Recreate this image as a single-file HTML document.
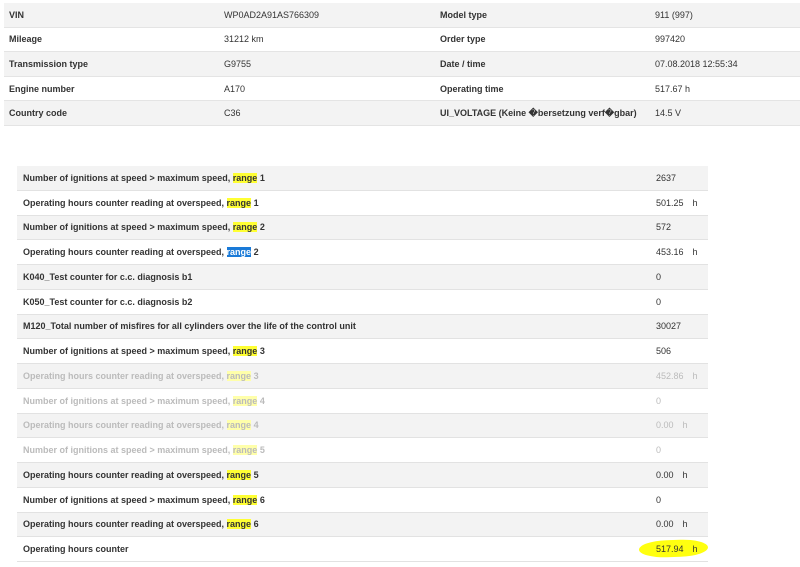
<!DOCTYPE html>
<html><head><style>
body{margin:0;width:800px;height:567px;background:#fff;font-family:"Liberation Sans",sans-serif;font-size:9px;color:#333;position:relative;overflow:hidden}
.t1{position:absolute;left:4px;top:3px;width:796px;border-collapse:collapse}
.t1 td{height:23.6px;padding:0;border-bottom:1px solid #e4e4e4;vertical-align:middle}
.t1 tr:nth-child(odd) td{background:#f3f3f3}
.t1 td.l{font-weight:bold;padding-left:5px;width:215px}
.t1 td.v{width:216px}
.t1 td.l2{font-weight:bold;width:215px}
.t2{position:absolute;left:17px;top:166px;width:691px;border-collapse:collapse}
.t2 td{height:23.75px;padding:0;border-bottom:1px solid #e2e2e2;vertical-align:middle}
.t2 tr:nth-child(odd) td{background:#f3f3f3}
.t2 td.l{padding-left:6px;font-weight:bold;width:633px}
.t2 tr.f td{color:#bbb}
.y{background:#ffff33}
.f .y{background:#ffffaa}
.s{background:#1a7ad8;color:#fff}
.h{display:inline-block;margin-left:9px}
.hl{position:absolute;left:639px;top:540px;width:69px;height:17px;background:#ffff10;border-radius:40%/50%;transform:rotate(-2deg)}
</style></head><body>
<table class="t1">
<tr><td class="l">VIN</td><td class="v">WP0AD2A91AS766309</td><td class="l2">Model type</td><td>911 (997)</td></tr>
<tr><td class="l">Mileage</td><td class="v">31212 km</td><td class="l2">Order type</td><td>997420</td></tr>
<tr><td class="l">Transmission type</td><td class="v">G9755</td><td class="l2">Date / time</td><td>07.08.2018 12:55:34</td></tr>
<tr><td class="l">Engine number</td><td class="v">A170</td><td class="l2">Operating time</td><td>517.67 h</td></tr>
<tr><td class="l">Country code</td><td class="v">C36</td><td class="l2">UI_VOLTAGE (Keine �bersetzung verf�gbar)</td><td>14.5 V</td></tr>
</table>
<div class="hl"></div>
<table class="t2">
<tr><td class="l">Number of ignitions at speed &gt; maximum speed, <span class="y">range</span> 1</td><td>2637</td></tr>
<tr><td class="l">Operating hours counter reading at overspeed, <span class="y">range</span> 1</td><td>501.25<span class="h">h</span></td></tr>
<tr><td class="l">Number of ignitions at speed &gt; maximum speed, <span class="y">range</span> 2</td><td>572</td></tr>
<tr><td class="l">Operating hours counter reading at overspeed, <span class="s">range</span> 2</td><td>453.16<span class="h">h</span></td></tr>
<tr><td class="l">K040_Test counter for c.c. diagnosis b1</td><td>0</td></tr>
<tr><td class="l">K050_Test counter for c.c. diagnosis b2</td><td>0</td></tr>
<tr><td class="l">M120_Total number of misfires for all cylinders over the life of the control unit</td><td>30027</td></tr>
<tr><td class="l">Number of ignitions at speed &gt; maximum speed, <span class="y">range</span> 3</td><td>506</td></tr>
<tr class="f"><td class="l">Operating hours counter reading at overspeed, <span class="y">range</span> 3</td><td>452.86<span class="h">h</span></td></tr>
<tr class="f"><td class="l">Number of ignitions at speed &gt; maximum speed, <span class="y">range</span> 4</td><td>0</td></tr>
<tr class="f"><td class="l">Operating hours counter reading at overspeed, <span class="y">range</span> 4</td><td>0.00<span class="h">h</span></td></tr>
<tr class="f"><td class="l">Number of ignitions at speed &gt; maximum speed, <span class="y">range</span> 5</td><td>0</td></tr>
<tr><td class="l">Operating hours counter reading at overspeed, <span class="y">range</span> 5</td><td>0.00<span class="h">h</span></td></tr>
<tr><td class="l">Number of ignitions at speed &gt; maximum speed, <span class="y">range</span> 6</td><td>0</td></tr>
<tr><td class="l">Operating hours counter reading at overspeed, <span class="y">range</span> 6</td><td>0.00<span class="h">h</span></td></tr>
<tr><td class="l" style="background:transparent">Operating hours counter</td><td style="background:transparent">517.94<span class="h">h</span></td></tr>
</table>
</body></html>
